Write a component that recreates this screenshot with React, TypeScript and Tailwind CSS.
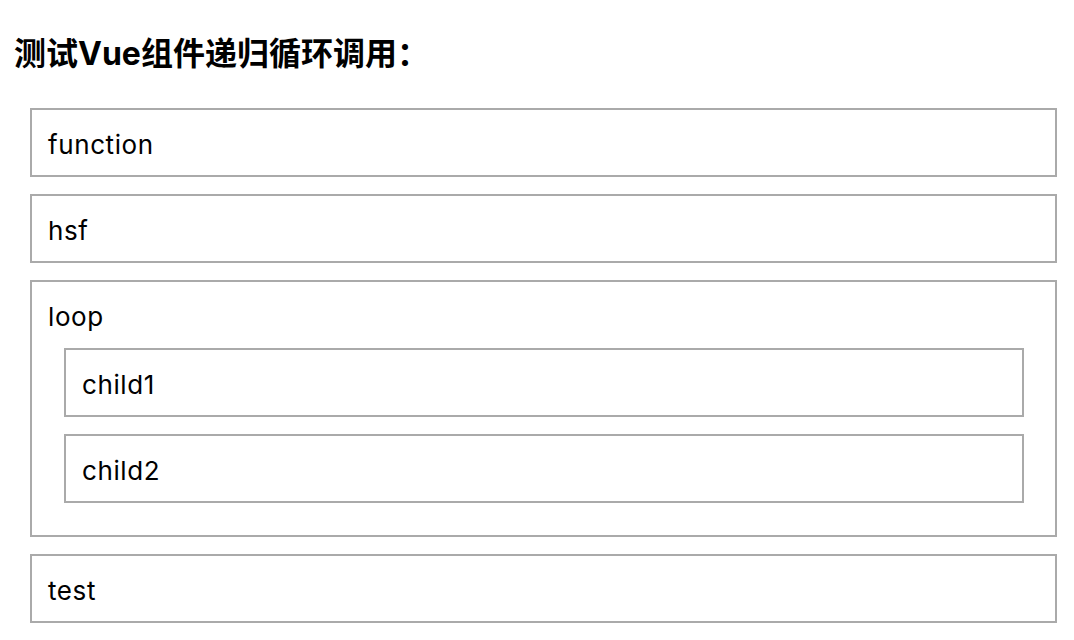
import React from 'react';

type Node = { name: string; children?: Node[] };

const data: Node[] = [
  { name: 'function' },
  { name: 'hsf' },
  { name: 'loop', children: [{ name: 'child1' }, { name: 'child2' }] },
  { name: 'test' },
];

const Item: React.FC<{ node: Node }> = ({ node }) => (
  <div className="border-2 border-[#aaaaaa] px-[16px] pt-[15px] pb-[15px]">
    <div className="h-[35px] leading-[39px] text-[26px] tracking-[0.6px]">{node.name}</div>
    {node.children && (
      <div className="mt-[16px] mb-[17px] ml-[16px] mr-[15px] flex flex-col gap-[17px]">
        {node.children.map((c) => (
          <Item key={c.name} node={c} />
        ))}
      </div>
    )}
  </div>
);

export default function App() {
  return (
    <div
      className="w-[1074px] h-[640px] bg-white text-black overflow-hidden"
      style={{ fontFamily: 'Inter, "Noto Sans CJK SC", sans-serif' }}
    >
      <h1 className="pt-[34px] pl-[14px] h-[74px] text-[32px] leading-[40px] font-bold">
        测试Vue组件递归循环调用：
      </h1>
      <div className="mt-[34px] ml-[30px] mr-[17px] flex flex-col gap-[17px]">
        {data.map((n) => (
          <Item key={n.name} node={n} />
        ))}
      </div>
    </div>
  );
}
